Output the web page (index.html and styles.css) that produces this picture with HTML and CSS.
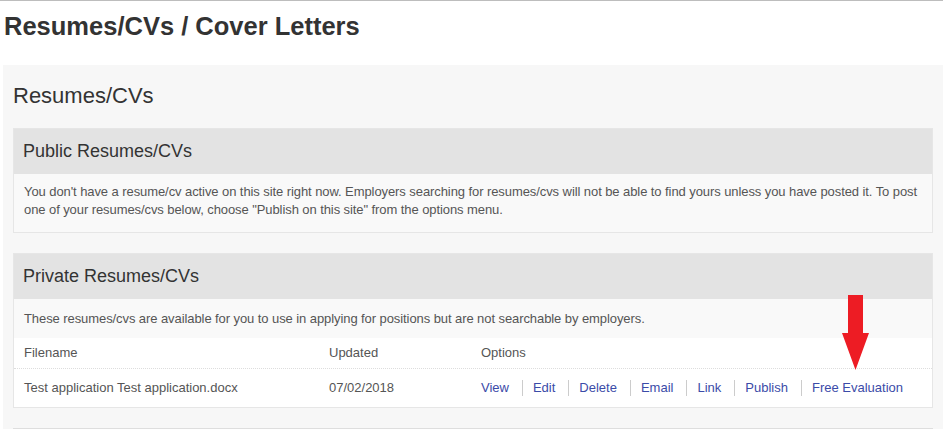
FILE: index.html
```html
<!DOCTYPE html>
<html lang="en">
<head>
<meta charset="utf-8">
<title>Resumes/CVs / Cover Letters</title>
<link rel="stylesheet" href="styles.css">
</head>
<body>
<h1 class="page-title">Resumes/CVs / Cover Letters</h1>
<div class="panel">
  <h2 class="panel-title">Resumes/CVs</h2>
  <section class="box">
    <div class="box-head">Public Resumes/CVs</div>
    <div class="box-body box-body-public">You don't have a resume/cv active on this site right now. Employers searching for resumes/cvs will not be able to find yours unless you have posted it. To post one of your resumes/cvs below, choose "Publish on this site" from the options menu.</div>
  </section>
  <section class="box">
    <div class="box-head">Private Resumes/CVs</div>
    <div class="box-body box-body-private">These resumes/cvs are available for you to use in applying for positions but are not searchable by employers.</div>
    <div class="table">
      <div class="row row-head">
        <div class="cell">Filename</div>
        <div class="cell">Updated</div>
        <div class="cell">Options</div>
      </div>
      <div class="row row-data">
        <div class="cell">Test application Test application.docx</div>
        <div class="cell">07/02/2018</div>
        <div class="cell options">
          <a href="#">View</a><a href="#">Edit</a><a href="#">Delete</a><a href="#">Email</a><a href="#">Link</a><a href="#">Publish</a><a href="#">Free Evaluation</a>
        </div>
      </div>
    </div>
  </section>
  <section class="box box-next"></section>
</div>
<svg class="arrow" width="29" height="77" viewBox="0 0 29 77" aria-hidden="true">
  <polygon points="7,1 22,1 22,39 28,39 14.5,76 1,39 7,39" fill="#ed1c24"/>
</svg>
</body>
</html>
```
FILE: styles.css
```css
html, body {
  margin: 0;
  padding: 0;
}
body {
  position: relative;
  border-top: 1px solid #bdbdbd;
  background: #ffffff;
  font-family: "Liberation Sans", Arial, sans-serif;
  color: #555555;
  font-size: 13px;
  line-height: 1.42857;
  overflow: hidden;
  height: 428px;
}
.page-title {
  margin: 12px 0 24px 4px;
  font-size: 25.5px;
  line-height: 27.5px;
  font-weight: bold;
  color: #333333;
}
.panel {
  margin-left: 3px;
  background: #f7f7f7;
  padding: 19px 10px 10px 10px;
}
.panel-title {
  margin: 0 0 20px 0;
  font-size: 22px;
  line-height: 24px;
  font-weight: normal;
  color: #333333;
}
.box {
  border: 1px solid #e6e6e6;
  margin-bottom: 20px;
  background: #f9f9f9;
}
.box-next {
  height: 60px;
  border-color: #dedede;
}
.box-head {
  background: #e3e3e3;
  height: 45px;
  line-height: 45px;
  padding: 0 9px;
  font-size: 18px;
  color: #333333;
}
.box-body {
  padding: 9px 10px 12px 10px;
  letter-spacing: -0.08px;
}
.box-body-private {
  padding: 11px 10px 10px 10px;
}
.table {
  background: #ffffff;
}
.row {
  display: grid;
  grid-template-columns: 305px 152px 1fr;
}
.row-head {
  border-bottom: 1px dotted #dddddd;
}
.row-head .cell {
  padding: 6px 10px 5px 10px;
}
.row-data .cell {
  padding: 10px 10px;
}
.options a {
  color: #3b4ba8;
  text-decoration: none;
  display: inline-block;
  line-height: 16px;
  margin-right: 13px;
}
.options a + a {
  border-left: 1px solid #cccccc;
  padding-left: 10px;
}
.arrow {
  position: absolute;
  left: 841px;
  top: 293px;
}
```
